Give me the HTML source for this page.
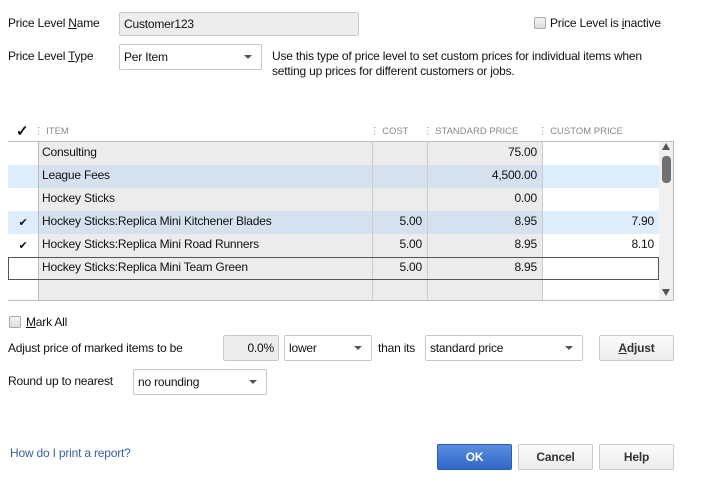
<!DOCTYPE html>
<html><head><style>
*{margin:0;padding:0;box-sizing:border-box}
body{width:701px;height:481px;background:#fff;font-family:"Liberation Sans",Arial,sans-serif;font-size:12px;color:#111;position:relative;overflow:hidden;letter-spacing:-0.2px}
.a{position:absolute;white-space:nowrap}
.u{text-decoration:underline}
.in{position:absolute;border:1px solid #c8c8c8;border-radius:2px;background:#fff;padding-left:4px;line-height:22px}
.dd::after{content:"";position:absolute;right:9px;top:10px;border-left:4px solid transparent;border-right:4px solid transparent;border-top:4px solid #555}
.cb{position:absolute;width:12px;height:12px;border:1px solid #aaa;border-radius:2px;background:linear-gradient(#f4f4f4,#ddd)}
.btn{position:absolute;border:1px solid #c9c9c9;border-radius:2px;background:linear-gradient(#fbfbfb,#ececec);text-align:center;font-weight:bold;color:#333;line-height:24px}
.hdr{position:absolute;top:126px;font-size:9.5px;color:#888;letter-spacing:0}
.row{position:absolute;left:8px;width:651px;height:23px}
.c{position:absolute;top:0;height:100%;line-height:21px}
.r{text-align:right;padding-right:5px}
</style></head><body>
<div class="a" style="left:8px;top:16px">Price Level <span class="u">N</span>ame</div>
<div class="in" style="left:119px;top:12px;width:240px;height:24px;background:#ededed">Customer123</div>
<div class="cb" style="left:534px;top:17px"></div>
<div class="a" style="left:550px;top:16px">Price Level is <span class="u">i</span>nactive</div>
<div class="a" style="left:8px;top:49px">Price Level <span class="u">T</span>ype</div>
<div class="in dd" style="left:119px;top:44px;width:143px;height:26px;line-height:24px">Per Item</div>
<div class="a" style="left:272px;top:49px;line-height:15px">Use this type of price level to set custom prices for individual items when<br>setting up prices for different customers or jobs.</div>

<div class="a" style="left:16px;top:122px;font-size:15px;font-weight:bold">✓</div>
<div class="hdr" style="left:34px">⋮ ITEM</div>
<div class="hdr" style="left:370px">⋮ COST</div>
<div class="hdr" style="left:423px">⋮ STANDARD PRICE</div>
<div class="hdr" style="left:538px">⋮ CUSTOM PRICE</div>

<div style="position:absolute;left:8px;top:141px;width:666px;height:160px;border:1px solid #bdbdbd;background:#fff"></div>
<div class="row" style="top:142px"><div class="c" style="left:0;width:30px;background:#fff"></div><div class="c" style="left:30px;width:334px;background:#ececec;padding-left:3px;border-left:1px solid #bbb">Consulting</div><div class="c" style="left:364px;width:55px;background:#ececec;border-left:1px solid #ccc"></div><div class="c r" style="left:419px;width:115px;background:#ececec;border-left:1px solid #ccc">75.00</div><div class="c" style="left:534px;width:117px;background:#fff;border-left:1px solid #ccc"></div></div>
<div class="row" style="top:165px"><div class="c" style="left:0;width:30px;background:#deedfb"></div><div class="c" style="left:30px;width:334px;background:#d5e1ef;padding-left:3px;border-left:1px solid #bbb">League Fees</div><div class="c" style="left:364px;width:55px;background:#d5e1ef;border-left:1px solid #ccc"></div><div class="c r" style="left:419px;width:115px;background:#d5e1ef;border-left:1px solid #ccc">4,500.00</div><div class="c" style="left:534px;width:117px;background:#deedfb;border-left:1px solid #ccc"></div></div>
<div class="row" style="top:188px"><div class="c" style="left:0;width:30px;background:#fff"></div><div class="c" style="left:30px;width:334px;background:#ececec;padding-left:3px;border-left:1px solid #bbb">Hockey Sticks</div><div class="c" style="left:364px;width:55px;background:#ececec;border-left:1px solid #ccc"></div><div class="c r" style="left:419px;width:115px;background:#ececec;border-left:1px solid #ccc">0.00</div><div class="c" style="left:534px;width:117px;background:#fff;border-left:1px solid #ccc"></div></div>
<div class="row" style="top:211px"><div class="c" style="left:0;width:30px;background:#deedfb;text-align:center;font-size:11px;padding-top:2px">✔</div><div class="c" style="left:30px;width:334px;background:#d5e1ef;padding-left:3px;border-left:1px solid #bbb">Hockey Sticks:Replica Mini Kitchener Blades</div><div class="c r" style="left:364px;width:55px;background:#d5e1ef;border-left:1px solid #ccc">5.00</div><div class="c r" style="left:419px;width:115px;background:#d5e1ef;border-left:1px solid #ccc">8.95</div><div class="c r" style="left:534px;width:117px;background:#deedfb;border-left:1px solid #ccc">7.90</div></div>
<div class="row" style="top:234px"><div class="c" style="left:0;width:30px;background:#fff;text-align:center;font-size:11px;padding-top:2px">✔</div><div class="c" style="left:30px;width:334px;background:#ececec;padding-left:3px;border-left:1px solid #bbb">Hockey Sticks:Replica Mini Road Runners</div><div class="c r" style="left:364px;width:55px;background:#ececec;border-left:1px solid #ccc">5.00</div><div class="c r" style="left:419px;width:115px;background:#ececec;border-left:1px solid #ccc">8.95</div><div class="c r" style="left:534px;width:117px;background:#fff;border-left:1px solid #ccc">8.10</div></div>
<div class="row" style="top:257px;height:22px"><div class="c" style="left:0;width:30px;background:#fff"></div><div class="c" style="left:30px;width:334px;background:#ececec;padding-left:3px;border-left:1px solid #bbb">Hockey Sticks:Replica Mini Team Green</div><div class="c r" style="left:364px;width:55px;background:#ececec;border-left:1px solid #ccc">5.00</div><div class="c r" style="left:419px;width:115px;background:#ececec;border-left:1px solid #ccc">8.95</div><div class="c" style="left:534px;width:117px;background:#fff;border-left:1px solid #ccc"></div></div>
<div style="position:absolute;left:8px;top:257px;width:651px;height:23px;border:1px solid #555"></div>
<div class="row" style="top:280px;height:20px"><div class="c" style="left:0;width:30px;background:#fff"></div><div class="c" style="left:30px;width:334px;background:#ececec;border-left:1px solid #bbb"></div><div class="c" style="left:364px;width:55px;background:#ececec;border-left:1px solid #ccc"></div><div class="c" style="left:419px;width:115px;background:#ececec;border-left:1px solid #ccc"></div><div class="c" style="left:534px;width:117px;background:#fff;border-left:1px solid #ccc"></div></div>
<div style="position:absolute;left:659px;top:142px;width:14px;height:158px;background:#f0f0f0"></div>
<div style="position:absolute;left:662px;top:143px;border-left:4px solid transparent;border-right:4px solid transparent;border-bottom:7px solid #555"></div>
<div style="position:absolute;left:662px;top:156px;width:9px;height:27px;border-radius:4px;background:#707070"></div>
<div style="position:absolute;left:662px;top:289px;border-left:4px solid transparent;border-right:4px solid transparent;border-top:7px solid #555"></div>

<div class="cb" style="left:9px;top:316px"></div>
<div class="a" style="left:26px;top:315px"><span class="u">M</span>ark All</div>
<div class="a" style="left:8px;top:341px">Adjust price of marked items to be</div>
<div class="in" style="left:223px;top:335px;width:56px;height:26px;background:#ededed;text-align:right;padding-right:4px;line-height:24px">0.0%</div>
<div class="in dd" style="left:284px;top:335px;width:88px;height:26px;line-height:24px">lower</div>
<div class="a" style="left:378px;top:341px">than its</div>
<div class="in dd" style="left:425px;top:335px;width:158px;height:26px;line-height:24px">standard price</div>
<div class="btn" style="left:599px;top:335px;width:75px;height:26px"><span class="u">A</span>djust</div>
<div class="a" style="left:8px;top:374px">Round up to nearest</div>
<div class="in dd" style="left:133px;top:369px;width:134px;height:26px;line-height:24px">no rounding</div>

<div class="a" style="left:10px;top:446px;color:#3a5ca8">How do I print a report?</div>
<div class="btn" style="left:437px;top:444px;width:75px;height:26px;background:linear-gradient(#5b8ee0,#2f67c9);border-color:#2a5bb0;color:#fff">OK</div>
<div class="btn" style="left:518px;top:444px;width:75px;height:26px">Cancel</div>
<div class="btn" style="left:599px;top:444px;width:75px;height:26px">Help</div>
</body></html>
